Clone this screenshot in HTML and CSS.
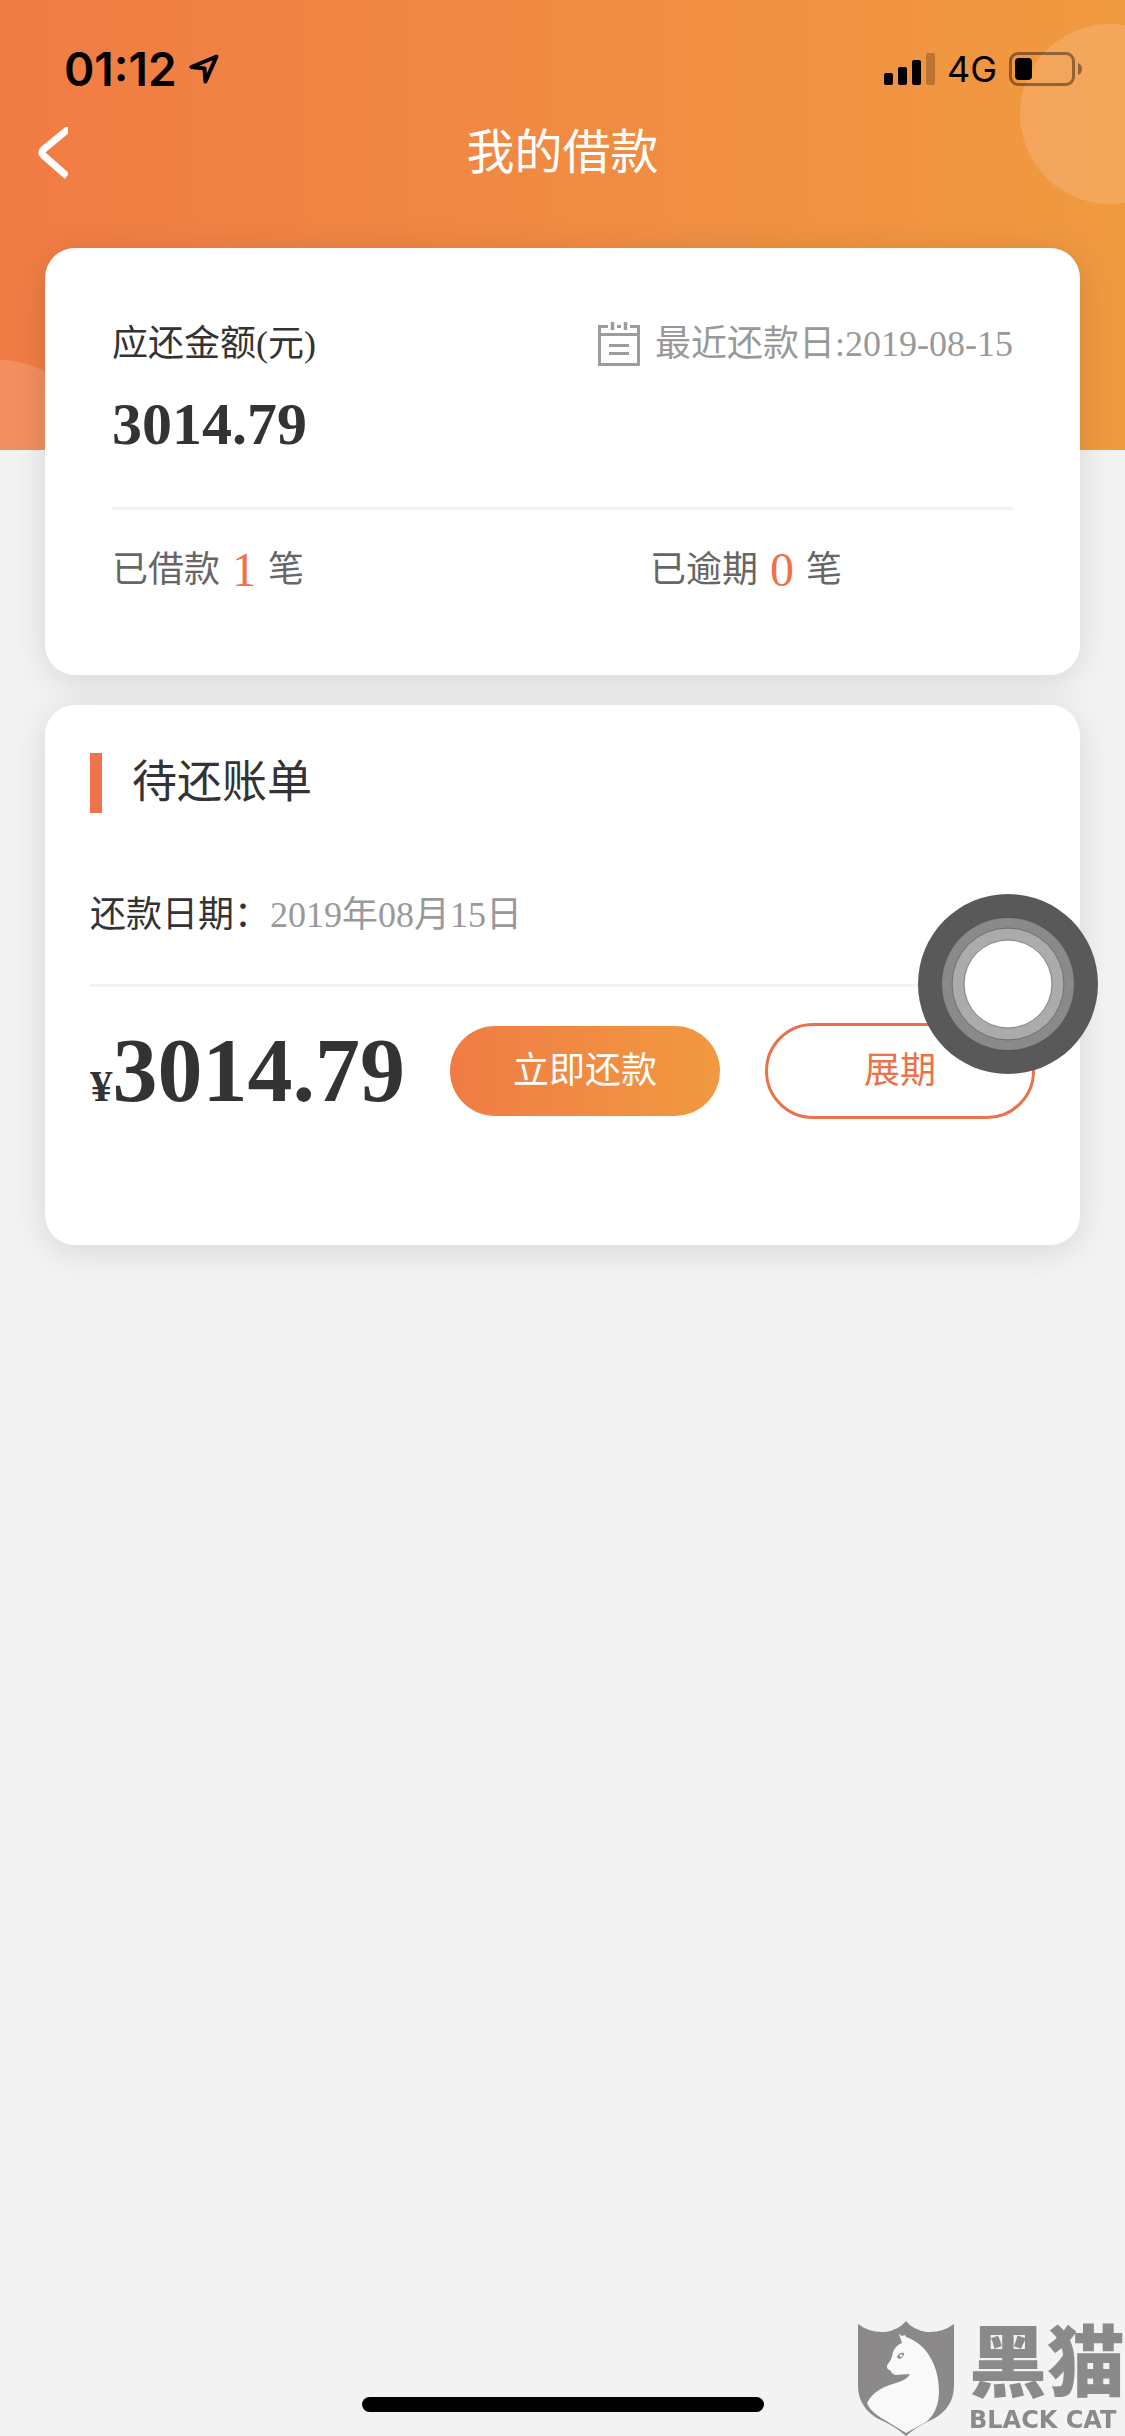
FILE: index.html
```html
<!DOCTYPE html>
<html lang="zh-CN">
<head>
<meta charset="utf-8">
<meta name="viewport" content="width=device-width, initial-scale=1">
<title>我的借款</title>
<link rel="stylesheet" href="styles.css">
</head>
<body>
<div class="page">
  <header class="hero">
    <div class="status">
      <div class="status-left">
        <span class="clock">01:12</span>
        <svg class="locate" viewBox="0 0 30 30" aria-hidden="true"><path d="M27.500 2.500 2.500 13 15.500 14.500 16.500 27.500Z" fill="none" stroke="#000" stroke-width="4" stroke-linejoin="round"/></svg>
      </div>
      <div class="status-right">
        <svg class="signal" viewBox="0 0 51 32" aria-hidden="true"><rect y="20" width="9" height="12" rx="2"/><rect x="14" y="14" width="9" height="18" rx="2"/><rect x="28" y="7" width="9" height="25" rx="2"/><rect x="42" width="9" height="32" rx="2" opacity=".22"/></svg>
        <span class="network">4G</span>
        <svg class="battery" viewBox="0 0 74 34" aria-hidden="true"><rect x="1.5" y="1.5" width="63" height="31" rx="7.5" fill="none" stroke="#000" stroke-opacity=".4" stroke-width="3"/><rect x="6" y="6" width="17" height="22" rx="4"/><path d="M69 11a6.500 6.500 0 0 1 0 12Z" opacity=".4"/></svg>
      </div>
    </div>
    <nav class="navbar">
      <button class="back" type="button" aria-label="返回"><svg viewBox="0 0 30 52" aria-hidden="true"><path d="M31 1.500 5.500 22.500Q2 25.500 5.500 28.500L29 49" fill="none" stroke="#fff" stroke-width="7"/></svg></button>
      <h1 class="title">我的借款</h1>
    </nav>
  </header>

  <main class="cards">
    <section class="card summary">
      <div class="summary-head">
        <span class="label">应还金额(元)</span>
        <span class="due">
          <svg class="calendar" viewBox="0 0 42 44" aria-hidden="true"><g fill="none" stroke="#9c9c9c" stroke-width="3"><path d="M10 4.500H1.500V42.500H40.500V4.500H32M1.500 12.500H40.500M11 23.500H31M11 31.500H31M19 4.500H23"/><path d="M14.500 0V8M27.500 0V8" stroke-width="3.500"/></g></svg>
          最近还款日:2019-08-15
        </span>
      </div>
      <strong class="total">3014.79</strong>
      <div class="counts">
        <span class="count">已借款<em>1</em>笔</span>
        <span class="count">已逾期<em>0</em>笔</span>
      </div>
    </section>

    <section class="card bill">
      <h2 class="bill-title">待还账单</h2>
      <p class="bill-date">还款日期：<time datetime="2019-08-15">2019年08月15日</time></p>
      <div class="bill-row">
        <strong class="price"><small>¥</small>3014.79</strong>
        <button class="btn btn-primary" type="button">立即还款</button>
        <button class="btn btn-outline" type="button">展期</button>
      </div>
    </section>
  </main>
</div>

<button class="assistive" type="button" aria-label="辅助触控"><svg viewBox="0 0 180 180" aria-hidden="true"><circle cx="90" cy="90" r="90" fill="#5a5959"/><circle cx="90" cy="90" r="66" fill="#8b8989"/><circle cx="90" cy="90" r="56" fill="#ababab" stroke="#6e6c6c"/><circle cx="90" cy="90" r="44" fill="#fff" stroke="#828080"/></svg></button>
<div class="home-bar"></div>
<div class="watermark">
  <svg class="shield" viewBox="0 0 98 115" aria-hidden="true">
    <path d="M1 3Q13 12 28 11Q42 9 49 0Q56 9 70 11Q85 12 97 3V64C97 85 84 95 70 101Q58 107 49 115Q40 107 28 101C14 95 1 85 1 64Z" fill="#8b8989"/>
    <path d="M42 13 45 15 48 14 49 16C68 22 82 43 82 70C82 84 77 95 69 101L49 112 31 101C21 95 13 90 10 82C16 70 28 65 39 62Q50 59 53 53L38 54Q34 52 33 49C30 49 29 45 31 43Q35 38 36 31Q39 24 45 22Z" fill="#f9f9f9"/>
    <path d="M40 36Q42 31 47 32Q47 37 42 38Z" fill="#8b8989"/><circle cx="44" cy="34.500" r="1.500" fill="#f9f9f9"/>
  </svg>
  <div class="brand"><span class="brand-cn">黑猫</span><span class="brand-en">BLACK CAT</span></div>
</div>
</body>
</html>
```
FILE: styles.css
```css
* {
  box-sizing: border-box;
}

body {
  margin: 0;
  background: #f3f3f3;
  color: #333;
  font-family: "Liberation Serif", "Noto Sans CJK SC", serif;
  font-size: 36px;
  line-height: 54px;
}

button {
  margin: 0;
  padding: 0;
  border: 0;
  background: none;
  font: inherit;
}

svg {
  display: block;
}

.page {
  min-height: 100vh;
}

/* Header */
.hero {
  position: relative;
  height: 450px;
  margin-bottom: -202px;
  overflow: hidden;
  background: linear-gradient(90deg, #f07c45, #f09a40);
}

.hero::before,
.hero::after {
  content: "";
  position: absolute;
  width: 180px;
  height: 180px;
  border-radius: 50%;
  background: rgba(255, 255, 255, .14);
}

.hero::before {
  left: -90px;
  bottom: -90px;
}

.hero::after {
  top: 24px;
  right: -75px;
}

.status {
  position: relative;
  z-index: 1;
  display: flex;
  justify-content: space-between;
  height: 108px;
  padding: 30px 42px 0 64px;
  color: #000;
  font-family: Inter, "Liberation Sans", sans-serif;
}

.status-left,
.status-right {
  display: flex;
  align-items: center;
  gap: 12px;
  height: 78px;
}

.clock {
  font-size: 46px;
  font-weight: 600;
}

.locate {
  width: 30px;
  height: 30px;
}

.signal {
  width: 51px;
  height: 32px;
}

.battery {
  width: 74px;
  height: 34px;
}

.navbar {
  display: grid;
  grid-template-columns: 90px 1fr 90px;
  align-items: center;
  height: 90px;
}

.back {
  display: flex;
  align-items: center;
  height: 90px;
  padding-left: 38px;
}

.back svg {
  width: 30px;
  height: 52px;
}

.title {
  margin: 0;
  color: #fff;
  font-size: 48px;
  font-weight: 400;
  text-align: center;
}

/* Cards */
.cards {
  position: relative;
  display: flex;
  flex-direction: column;
  gap: 30px;
  padding: 0 45px;
}

.card {
  border-radius: 30px;
  background: #fff;
  box-shadow: 0 6px 36px rgba(0, 0, 0, .12);
}

.summary {
  padding: 69px 67px 63px;
}

.summary-head {
  display: flex;
  align-items: center;
  justify-content: space-between;
}

.due {
  display: flex;
  align-items: center;
  gap: 15px;
  color: #999;
}

.calendar {
  width: 42px;
  height: 44px;
}

.total {
  display: block;
  padding: 12px 0 42px;
  border-bottom: 3px solid #f3f3f3;
  font-size: 60px;
  line-height: 82px;
}

.counts {
  display: grid;
  grid-template-columns: 1fr 363px;
  padding: 30px 0 12px;
}

.count {
  display: flex;
  align-items: center;
  gap: 12px;
  height: 60px;
  color: #666;
  line-height: 60px;
}

.count em {
  color: #ef7249;
  font-size: 48px;
  font-style: normal;
}

.bill {
  padding: 48px 45px 126px;
}

.bill-title {
  margin: 0;
  padding-left: 30px;
  border-left: 12px solid #ef7249;
  font-size: 45px;
  font-weight: 400;
  line-height: 60px;
}

.bill-date {
  margin: 0;
  padding: 75px 0 42px;
  border-bottom: 3px solid #f3f3f3;
}

.bill-date time {
  color: #999;
}

.bill-row {
  display: flex;
  align-items: center;
  gap: 45px;
  padding-top: 36px;
}

.price {
  flex: 1;
  font-size: 90px;
  line-height: 96px;
}

.price small {
  font-size: 45px;
  line-height: 48px;
}

.btn {
  flex: none;
  width: 270px;
  height: 90px;
  border-radius: 48px;
}

.btn-primary {
  background: linear-gradient(90deg, #f07c45, #f09a40);
  color: #fff;
}

.btn-outline {
  height: 96px;
  border: 3px solid #ea7249;
  color: #ea7249;
}

/* Overlays */
.assistive {
  position: fixed;
  top: 894px;
  right: 27px;
}

.assistive svg {
  width: 180px;
  height: 180px;
}

.home-bar {
  position: fixed;
  bottom: 24px;
  left: 50%;
  width: 402px;
  height: 15px;
  margin-left: -201px;
  border-radius: 8px;
  background: #000;
}

.watermark {
  position: fixed;
  right: 0;
  bottom: 0;
  display: flex;
  gap: 14px;
  color: #8b8989;
}

.shield {
  width: 98px;
  height: 115px;
}

.brand {
  display: flex;
  flex-direction: column;
  gap: 12px;
}

.brand-cn {
  font-family: "Noto Sans CJK SC", sans-serif;
  font-size: 78px;
  font-weight: 900;
  line-height: 72px;
}

.brand-en {
  font-family: "DejaVu Sans", sans-serif;
  font-size: 24px;
  font-weight: 700;
  line-height: 30px;
}
```
